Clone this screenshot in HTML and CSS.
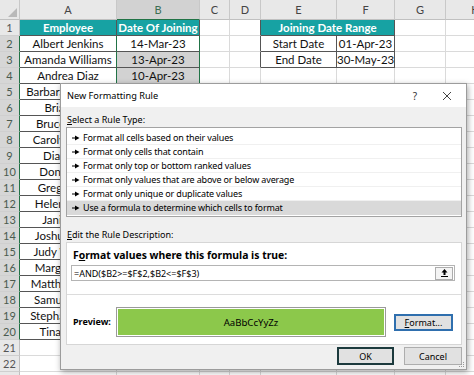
FILE: index.html
```html
<!DOCTYPE html>
<html lang="en">
<head>
<meta charset="utf-8">
<title>New Formatting Rule</title>
<link rel="stylesheet" href="styles.css">
</head>
<body>
<table class="sheet">
  <colgroup>
    <col class="w-rh"><col class="w-a"><col class="w-b"><col class="w-c"><col class="w-d"><col class="w-e"><col class="w-f"><col class="w-g"><col class="w-h">
  </colgroup>
  <thead>
    <tr class="colhdr"><th class="corner"><span class="tri"></span></th><th>A</th><th class="colsel">B</th><th>C</th><th>D</th><th>E</th><th>F</th><th>G</th><th>H</th></tr>
  </thead>
  <tbody>
    <tr><th class="rh">1</th><td class="tt a">Employee</td><td class="tt b">Date Of Joining</td><td></td><td class="dx"></td><td class="tt e" colspan="2">Joining Date Range</td><td></td><td></td></tr>
    <tr><th class="rh rs">2</th><td class="a sa">Albert Jenkins</td><td class="b sb">14-Mar-23</td><td></td><td class="dx"></td><td class="e">Start Date</td><td class="e">01-Apr-23</td><td></td><td></td></tr>
    <tr><th class="rh rs">3</th><td class="a sa">Amanda Williams</td><td class="b sb sel">13-Apr-23</td><td></td><td class="dx"></td><td class="e">End Date</td><td class="e">30-May-23</td><td></td><td></td></tr>
    <tr><th class="rh rs">4</th><td class="a sa">Andrea Diaz</td><td class="b sb sel">10-Apr-23</td><td></td><td></td><td></td><td></td><td></td><td></td></tr>
    <tr><th class="rh rs">5</th><td class="a sa">Barbara Johnson</td><td class="b sb sel"></td><td></td><td></td><td></td><td></td><td></td><td></td></tr>
    <tr><th class="rh rs">6</th><td class="a sa">Brian Lee</td><td class="b sb sel"></td><td></td><td></td><td></td><td></td><td></td><td></td></tr>
    <tr><th class="rh rs">7</th><td class="a sa">Bruce Carter</td><td class="b sb sel"></td><td></td><td></td><td></td><td></td><td></td><td></td></tr>
    <tr><th class="rh rs">8</th><td class="a sa">Carolyn Smith</td><td class="b sb sel"></td><td></td><td></td><td></td><td></td><td></td><td></td></tr>
    <tr><th class="rh rs">9</th><td class="a sa">Diana Lee</td><td class="b sb sel"></td><td></td><td></td><td></td><td></td><td></td><td></td></tr>
    <tr><th class="rh rs">10</th><td class="a sa">Donald Fox</td><td class="b sb sel"></td><td></td><td></td><td></td><td></td><td></td><td></td></tr>
    <tr><th class="rh rs">11</th><td class="a sa">Gregory Hill</td><td class="b sb sel"></td><td></td><td></td><td></td><td></td><td></td><td></td></tr>
    <tr><th class="rh rs">12</th><td class="a sa">Helen Moore</td><td class="b sb sel"></td><td></td><td></td><td></td><td></td><td></td><td></td></tr>
    <tr><th class="rh rs">13</th><td class="a sa">Janice Lee</td><td class="b sb sel"></td><td></td><td></td><td></td><td></td><td></td><td></td></tr>
    <tr><th class="rh rs">14</th><td class="a sa">Joshua Baker</td><td class="b sb sel"></td><td></td><td></td><td></td><td></td><td></td><td></td></tr>
    <tr><th class="rh rs">15</th><td class="a sa">Judy Williams</td><td class="b sb sel"></td><td></td><td></td><td></td><td></td><td></td><td></td></tr>
    <tr><th class="rh rs">16</th><td class="a sa">Margaret Lee</td><td class="b sb sel"></td><td></td><td></td><td></td><td></td><td></td><td></td></tr>
    <tr><th class="rh rs">17</th><td class="a sa">Matthew Clark</td><td class="b sb sel"></td><td></td><td></td><td></td><td></td><td></td><td></td></tr>
    <tr><th class="rh rs">18</th><td class="a sa">Samuel Jones</td><td class="b sb sel"></td><td></td><td></td><td></td><td></td><td></td><td></td></tr>
    <tr><th class="rh rs">19</th><td class="a sa">Stephanie King</td><td class="b sb sel"></td><td></td><td></td><td></td><td></td><td></td><td></td></tr>
    <tr><th class="rh rs">20</th><td class="a sa">Tina Turner</td><td class="b sb sel"></td><td></td><td></td><td></td><td></td><td></td><td></td></tr>
    <tr><th class="rh">21</th><td></td><td></td><td></td><td></td><td></td><td></td><td></td><td></td></tr>
    <tr><th class="rh">22</th><td></td><td></td><td></td><td></td><td></td><td></td><td></td><td></td></tr>
    <tr><th class="rh"></th><td></td><td></td><td></td><td></td><td></td><td></td><td></td><td></td></tr>
  </tbody>
</table>

<div class="dlg">
  <div class="titlebar">
    <span class="title">New Formatting Rule</span>
    <span class="help">?</span>
    <svg class="close" width="10" height="10" viewBox="0 0 10 10"><path d="M1 1L9 9M9 1L1 9" stroke="#444" stroke-width="1" fill="none"/></svg>
  </div>
  <div class="body">
    <div class="label"><u>S</u>elect a Rule Type:</div>
    <ul class="rules">
      <li><svg class="arr" width="8" height="6" viewBox="0 0 8 6"><path d="M0 3H4" stroke="#000" stroke-width="1"/><path d="M3 0.5L7.5 3L3 5.5Z" fill="#000"/></svg>Format all cells based on their values</li>
      <li><svg class="arr" width="8" height="6" viewBox="0 0 8 6"><path d="M0 3H4" stroke="#000" stroke-width="1"/><path d="M3 0.5L7.5 3L3 5.5Z" fill="#000"/></svg>Format only cells that contain</li>
      <li><svg class="arr" width="8" height="6" viewBox="0 0 8 6"><path d="M0 3H4" stroke="#000" stroke-width="1"/><path d="M3 0.5L7.5 3L3 5.5Z" fill="#000"/></svg>Format only top or bottom ranked values</li>
      <li><svg class="arr" width="8" height="6" viewBox="0 0 8 6"><path d="M0 3H4" stroke="#000" stroke-width="1"/><path d="M3 0.5L7.5 3L3 5.5Z" fill="#000"/></svg>Format only values that are above or below average</li>
      <li><svg class="arr" width="8" height="6" viewBox="0 0 8 6"><path d="M0 3H4" stroke="#000" stroke-width="1"/><path d="M3 0.5L7.5 3L3 5.5Z" fill="#000"/></svg>Format only unique or duplicate values</li>
      <li class="active"><svg class="arr" width="8" height="6" viewBox="0 0 8 6"><path d="M0 3H4" stroke="#000" stroke-width="1"/><path d="M3 0.5L7.5 3L3 5.5Z" fill="#000"/></svg>Use a formula to determine which cells to format</li>
    </ul>
    <div class="label label-edit"><u>E</u>dit the Rule Description:</div>
    <div class="panel">
      <div class="blabel flabel">F<u>o</u>rmat values where this formula is true:</div>
      <div class="formula">
        <span class="ftext">=AND($B2&gt;=$F$2,$B2&lt;=$F$3)</span>
        <span class="collapse"><svg width="9" height="10" viewBox="0 0 9 10"><path d="M4.5 1L1.5 4.5H3.5V7H5.5V4.5H7.5Z" fill="#000"/><path d="M1 8.5H8" stroke="#000" stroke-width="1"/></svg></span>
      </div>
      <div class="sep"></div>
      <div class="prow">
        <span class="blabel plabel">Preview:</span>
        <div class="preview"><div class="pfill">AaBbCcYyZz</div></div>
        <span class="btn btn-format"><u>F</u>ormat...</span>
      </div>
    </div>
    <div class="actions">
      <span class="btn btn-ok">OK</span>
      <span class="btn btn-cancel">Cancel</span>
    </div>
  </div>
  <svg class="grip" width="6" height="6" viewBox="0 0 6 6"><rect x="4" y="0" width="1" height="1" fill="#999"/><rect x="2" y="2" width="1" height="1" fill="#999"/><rect x="4" y="2" width="1" height="1" fill="#999"/><rect x="0" y="4" width="1" height="1" fill="#999"/><rect x="2" y="4" width="1" height="1" fill="#999"/><rect x="4" y="4" width="1" height="1" fill="#999"/></svg>
</div>
</body>
</html>
```
FILE: styles.css
```css
* { box-sizing: border-box; }
html, body { margin: 0; padding: 0; }
body {
  width: 474px;
  height: 375px;
  overflow: hidden;
  background: #fff;
  position: relative;
  font-family: Lato, "Liberation Sans", sans-serif;
}

/* ---------- spreadsheet ---------- */
.sheet {
  border-collapse: separate;
  border-spacing: 0;
  table-layout: fixed;
  width: 506px;
}
.w-rh { width: 20px; }
.w-a { width: 97px; }
.w-b { width: 83px; }
.w-c { width: 30px; }
.w-d { width: 31px; }
.w-e { width: 76px; }
.w-f { width: 58px; }
.w-g { width: 51px; }
.w-h { width: 60px; }

.sheet th, .sheet td {
  padding: 0;
  height: 16px;
  line-height: 15px;
  border-right: 1px solid #dadada;
  border-bottom: 1px solid #dadada;
  font-size: 11.5px;
  text-align: center;
  white-space: nowrap;
  overflow: hidden;
  color: #111;
}
.colhdr th {
  height: 20px;
  line-height: 19px;
  background: #e8e8e8;
  color: #444;
  font-weight: normal;
  font-size: 11px;
  border-right-color: #c8c8c8;
  border-bottom-color: #c0c0c0;
}
.colhdr .colsel {
  background: #d2d2d2;
  color: #3c6e52;
  border-bottom: 1px solid #217346;
}
.corner { position: relative; }
.tri {
  position: absolute;
  right: 2px;
  bottom: 2px;
  width: 0;
  height: 0;
  border-left: 9px solid transparent;
  border-bottom: 9px solid #b9b9b9;
}
.sheet .rh {
  background: #e8e8e8;
  color: #555;
  font-weight: normal;
  font-size: 11px;
  border-right-color: #c0c0c0;
  border-bottom-color: #cfcfcf;
}
.sheet .rh.rs {
  background: #d6d6d6;
  color: #4a5a4f;
  border-right-color: #217346;
}
.sheet .tt {
  background: #17a2a3;
  color: #fff;
  font-weight: bold;
}
.sheet .a, .sheet .b, .sheet .e {
  border-right-color: #555;
  border-bottom-color: #555;
}
.sheet .dx { border-right-color: #555; }
.sheet .sa, .sheet .sb { border-right-color: #217346; }
.sheet .sel { background: #d2d2d2; }

/* ---------- dialog ---------- */
.dlg {
  position: absolute;
  left: 60px;
  top: 83px;
  width: 407px;
  height: 287px;
  border: 1px solid #9c9c9c;
  background: #f0f0f0;
  box-shadow: 1px 2px 6px rgba(0, 0, 0, 0.35);
  display: flex;
  flex-direction: column;
  font-family: "Noto Sans", "Open Sans", sans-serif;
  font-size: 9px;
  color: #000;
}
.titlebar {
  height: 23px;
  background: #fff;
  display: flex;
  align-items: center;
  padding: 0 14px 0 6px;
}
.title { flex: 1; font-size: 9.2px; }
.help { font-size: 10px; color: #333; margin-right: 25px; }
.close { display: block; }

.body {
  flex: 1;
  padding: 0 4px 0 5px;
  display: flex;
  flex-direction: column;
}
.label {
  height: 14px;
  line-height: 14px;
  margin-top: 6px;
  padding-left: 1px;
}
.label-edit { margin-top: 11px; }

.rules {
  list-style: none;
  margin: 0;
  padding: 3px 0 1px;
  height: 90px;
  background: #fff;
  border: 1px solid #a3a3a3;
}
.rules li {
  height: 14px;
  line-height: 14px;
  padding-left: 5px;
  display: flex;
  align-items: center;
  letter-spacing: -0.15px;
  border-bottom: 1px solid #f0f0f0;
}
.rules li.active { background: #d9d9d9; border-bottom-color: #d9d9d9; }
.arr { display: block; margin-right: 3px; flex: none; }

.panel {
  height: 103px;
  background: #fff;
  border: 1px solid #d6d6d6;
  display: flex;
  flex-direction: column;
}
.blabel {
  font-weight: bold;
  height: 14px;
  line-height: 14px;
  margin: 5px 0 0 6px;
}
.flabel { font-size: 10.4px; }
.formula {
  margin: 3px 6px 0 4px;
  height: 16px;
  border: 1px solid #b4b4b4;
  background: #fff;
  display: flex;
  align-items: center;
  padding: 0 1px 0 2px;
}
.ftext { flex: 1; }
.collapse {
  width: 18px;
  height: 13px;
  border: 1px solid #adadad;
  background: #f4f4f4;
  display: flex;
  align-items: center;
  justify-content: center;
}
.collapse svg { display: block; }
.sep {
  height: 1px;
  background: #dcdcdc;
  margin-top: 13px;
}
.prow {
  display: flex;
  align-items: center;
  margin-top: 12px;
  height: 30px;
}
.plabel { margin: 0 0 0 6px; width: 43px; }
.preview {
  width: 270px;
  height: 30px;
  border: 1px solid #9a9a9a;
  padding: 1px;
  background: #fff;
}
.pfill {
  height: 100%;
  background: #8cc84b;
  display: flex;
  align-items: center;
  justify-content: center;
  font-size: 9.6px;
}
.btn {
  display: flex;
  align-items: center;
  justify-content: center;
  height: 18px;
  background: #e1e1e1;
  border: 1px solid #adadad;
  font-size: 9px;
}
.btn-format {
  width: 59px;
  height: 17px;
  margin-left: 8px;
  border: 2px solid #2f6fae;
}
.actions {
  display: flex;
  justify-content: flex-end;
  margin-top: 2px;
}
.btn-ok {
  width: 57px;
  border: 2px solid #1c3a3d;
}
.btn-cancel {
  width: 58px;
  margin-left: 10px;
}
.grip {
  position: absolute;
  right: 1px;
  bottom: 1px;
}
```
